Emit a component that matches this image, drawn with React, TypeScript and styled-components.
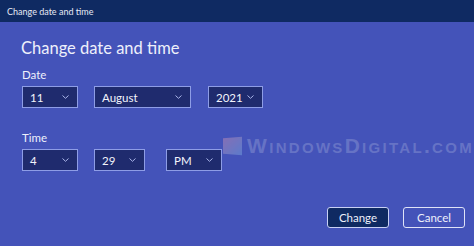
import React from "react";
import styled, { createGlobalStyle } from "styled-components";

const Global = createGlobalStyle`
  html, body { margin: 0; padding: 0; background: #4453b9; }
  body { font-family: Lato, "Open Sans", sans-serif; }
`;

const Window = styled.div`
  position: relative;
  width: 474px;
  height: 246px;
  background: #4453b9;
  display: flex;
  flex-direction: column;
  overflow: hidden;
`;

const TitleBar = styled.div`
  height: 22px;
  background: #0f2a62;
  color: #e6e9f5;
  font-size: 9px;
  display: flex;
  align-items: center;
  padding-left: 7px;
`;

const Body = styled.div`
  flex: 1;
  display: flex;
  flex-direction: column;
  padding: 13px 0 0 21px;
`;

const Heading = styled.div`
  font-size: 16.5px;
  color: #eef0fb;
  line-height: 26px;
  height: 26px;
`;

const Label = styled.div<{ $top: number }>`
  font-size: 11.5px;
  color: #eef0fb;
  margin-top: ${(p) => p.$top}px;
  line-height: 14px;
  margin-left: 1px;
`;

const Row = styled.div`
  display: flex;
  margin-top: 4px;
  margin-left: 1px;
`;

const Select = styled.div<{ $w: number; $gap: number }>`
  box-sizing: border-box;
  width: ${(p) => p.$w}px;
  height: 22px;
  margin-right: ${(p) => p.$gap}px;
  background: #1f2b6e;
  border: 1px solid #8e9de6;
  display: flex;
  align-items: center;
  justify-content: space-between;
  padding: 0 8px 0 7px;
  color: #f2f4fc;
  font-size: 11.5px;
`;

const Chevron = () => (
  <svg width="7" height="4" viewBox="0 0 7 4">
    <path d="M0.5 0.5 L3.5 3.3 L6.5 0.5" fill="none" stroke="#aab4e8" strokeWidth="1" />
  </svg>
);

const Buttons = styled.div`
  margin-top: auto;
  margin-bottom: 18px;
  display: flex;
  justify-content: flex-end;
  gap: 14px;
  padding-right: 9px;
`;

const Button = styled.div<{ $primary?: boolean }>`
  box-sizing: border-box;
  width: 62px;
  height: 21px;
  border-radius: 3px;
  border: 1px solid ${(p) => (p.$primary ? "#c9d1f4" : "#dfe3f7")};
  background: ${(p) => (p.$primary ? "#0f2a62" : "transparent")};
  color: #eef0fb;
  font-size: 11.5px;
  display: flex;
  align-items: center;
  justify-content: center;
`;

const Watermark = styled.div`
  position: absolute;
  left: 223px;
  top: 133px;
  width: 251px;
  display: flex;
  align-items: center;
  gap: 5px;
  opacity: 0.4;
  white-space: nowrap;
`;

const WmText = styled.span`
  font-family: "Liberation Sans", Arial, sans-serif;
  font-weight: bold;
  font-variant: small-caps;
  font-size: 21px;
  color: #9aa3d8;
  letter-spacing: 2.3px;
`;

const Field = ({ value, w, gap }: { value: string; w: number; gap: number }) => (
  <Select $w={w} $gap={gap}>
    <span>{value}</span>
    <Chevron />
  </Select>
);

export default function App() {
  return (
    <>
      <Global />
      <Window>
        <TitleBar>Change date and time</TitleBar>
        <Body>
          <Heading>Change date and time</Heading>
          <Label $top={7}>Date</Label>
          <Row>
            <Field value="11" w={56} gap={16} />
            <Field value="August" w={97} gap={17} />
            <Field value="2021" w={55} gap={0} />
          </Row>
          <Label $top={23}>Time</Label>
          <Row>
            <Field value="4" w={56} gap={16} />
            <Field value="29" w={51} gap={21} />
            <Field value="PM" w={56} gap={0} />
          </Row>
          <Buttons>
            <Button $primary>Change</Button>
            <Button>Cancel</Button>
          </Buttons>
        </Body>
        <Watermark>
          <svg width="27" height="26" viewBox="0 0 27 26">
            <defs>
              <linearGradient id="wg" x1="0" y1="0" x2="1" y2="1">
                <stop offset="0" stopColor="#e89ab0" />
                <stop offset="1" stopColor="#7fb6e8" />
              </linearGradient>
            </defs>
            <path d="M0 2 L27 0 L27 26 L0 24 Z" fill="url(#wg)" />
          </svg>
          <WmText>WindowsDigital.com</WmText>
        </Watermark>
      </Window>
    </>
  );
}
